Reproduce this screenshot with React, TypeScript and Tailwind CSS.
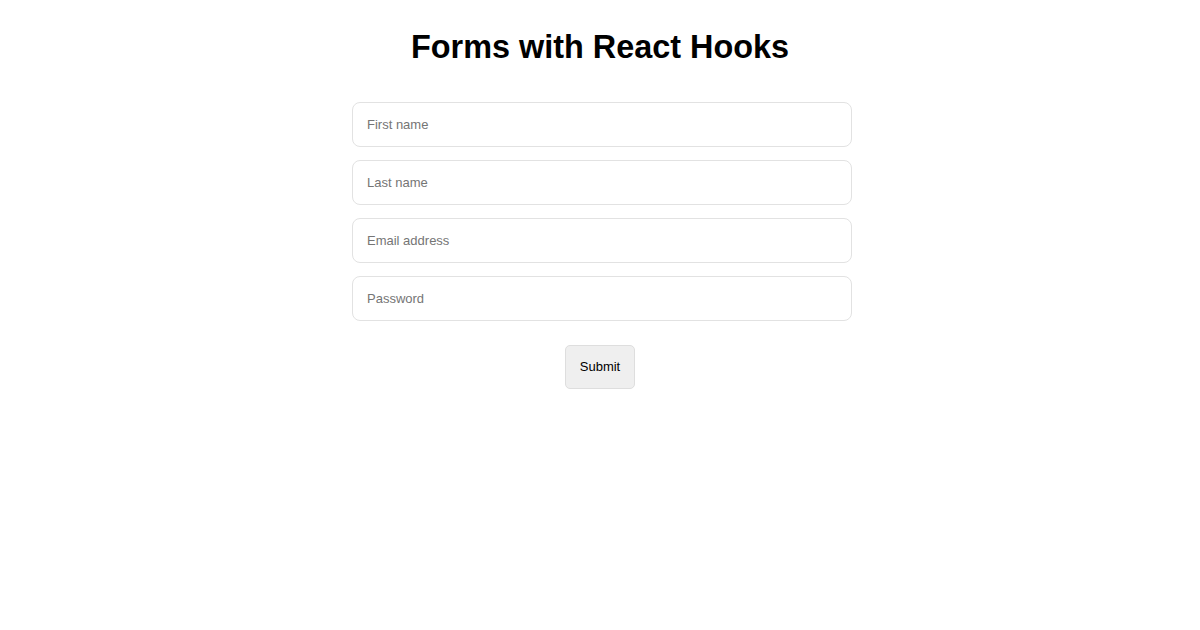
export default function App() {
  const fields = [
    { name: "firstName", placeholder: "First name", type: "text" },
    { name: "lastName", placeholder: "Last name", type: "text" },
    { name: "email", placeholder: "Email address", type: "email" },
    { name: "password", placeholder: "Password", type: "password" },
  ];

  return (
    <div className="min-h-screen bg-white font-['Liberation_Sans',Arial,sans-serif] text-black">
      <div className="mx-auto flex w-[500px] flex-col items-center pt-[29px]">
        <h1 className="text-[32.4px] font-bold leading-[37px]">Forms with React Hooks</h1>

        <form className="mt-[36px] flex w-full flex-col items-center" onSubmit={(e) => e.preventDefault()}>
          <div className="ml-[4px] flex w-full flex-col gap-[13px]">
            {fields.map((f) => (
              <input
                key={f.name}
                name={f.name}
                type={f.type}
                placeholder={f.placeholder}
                className="h-[45px] w-full rounded-[8px] border border-[#e2e2e2] px-[14px] text-[13px] outline-none placeholder:text-[#757575]"
              />
            ))}
          </div>

          <button
            type="submit"
            className="mt-[24px] h-[44px] w-[70px] rounded-[5px] border border-[#dedede] bg-[#efefef] text-[13px] text-black"
          >
            Submit
          </button>
        </form>
      </div>
    </div>
  );
}
